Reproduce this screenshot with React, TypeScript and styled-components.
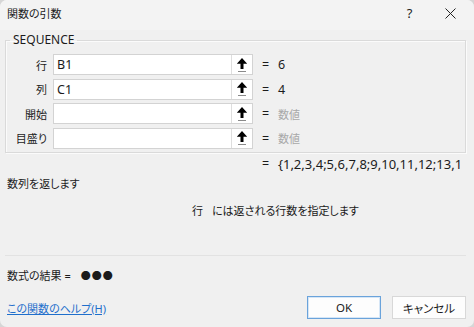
import React from 'react';
import styled, { createGlobalStyle, css } from 'styled-components';

const latin = `"Noto Sans", "Noto Sans CJK JP", sans-serif`;

const GlobalStyle = createGlobalStyle`
  html, body {
    margin: 0;
    padding: 0;
    background: #d6d6d6;
  }
  body {
    font-family: ${latin};
    font-feature-settings: 'palt';
    color: #1b1b1b;
  }
`;

// 行ごとの列幅（グループ内と結果行で共通）
const argColumns = css`
  display: grid;
  grid-template-columns: 41px 200px 1fr;
  column-gap: 6px;
  align-items: center;
`;

const Window = styled.div`
  width: 474px;
  height: 327px;
  box-sizing: border-box;
  background: #f0f0f0;
  border-radius: 7px;
  overflow: hidden;
  display: flex;
  flex-direction: column;
`;

const TitleBar = styled.div`
  height: 30px;
  flex: none;
  display: flex;
  align-items: center;
  padding: 0 3px 4px 7px;
  box-sizing: border-box;
  background: #f3f3f3;
`;

const Title = styled.div`
  flex: 1;
  font-size: 11px;
`;

const TitleButton = styled.div`
  width: 41px;
  height: 26px;
  display: flex;
  align-items: center;
  justify-content: center;
  font-size: 13px;
  color: #222;
`;

const Body = styled.div`
  flex: 1;
  display: flex;
  flex-direction: column;
  padding: 0 8px 0 5px;
`;

const Group = styled.fieldset`
  margin: 2px 0 0 0;
  padding: 6px 0 3px 0;
  border: 1px solid #dadada;
  box-shadow: 1px 1px 0 #fbfbfb, inset 1px 1px 0 #fbfbfb;
  ${argColumns};
  row-gap: 3.5px;
`;

const Legend = styled.legend`
  margin-left: 4px;
  padding: 0 3px;
  font-size: 12px;
  line-height: 16px;
`;

const ArgLabel = styled.div`
  text-align: right;
  font-size: 11px;
`;

const Field = styled.div`
  display: flex;
  height: 21px;
  box-sizing: border-box;
  border: 1px solid #d3d3d3;
  background: #fff;
`;

const TextBox = styled.div`
  flex: 1;
  padding-left: 3px;
  font-size: 12.5px;
  line-height: 19px;
`;

const RefButton = styled.div`
  width: 20px;
  border-left: 1px solid #dedede;
  display: flex;
  align-items: center;
  justify-content: center;
`;

const Value = styled.div<{ $muted?: boolean }>`
  display: flex;
  align-items: center;
  white-space: nowrap;
  overflow: hidden;
  font-size: ${p => (p.$muted ? '11px' : '12.5px')};
  color: ${p => (p.$muted ? '#a8a8a8' : '#1b1b1b')};
`;

const Equal = styled.span`
  width: 16px;
  padding-left: 3px;
  flex: none;
  font-size: 12.5px;
  color: #1b1b1b;
`;

const ResultRow = styled.div`
  ${argColumns};
  margin: 3px 0 0 1px;
  height: 16px;
`;

const ResultValue = styled(Value)`
  grid-column: 3;
  font-size: 13px;
`;

const Description = styled.div`
  margin-top: 4px;
  padding-left: 2px;
  font-size: 11px;
  line-height: 16px;
`;

const ArgHelp = styled.div`
  margin-top: 11px;
  padding-left: 187px;
  display: flex;
  gap: 9px;
  font-size: 11px;
  line-height: 16px;
`;

const Footer = styled.div`
  margin-top: auto;
  border-top: 1px solid #e2e2e2;
  padding: 9px 0 8px 2px;
`;

const FormulaResult = styled.div`
  height: 20px;
  display: flex;
  align-items: center;
  font-size: 11px;
`;

const Dots = styled.span`
  margin-left: 10px;
  font-size: 10px;
  letter-spacing: 1px;
`;

const BottomRow = styled.div`
  margin-top: 11px;
  display: flex;
  align-items: center;
  gap: 11px;
`;

const HelpLink = styled.a`
  flex: 1;
  font-size: 11px;
  color: #1f6fcc;
  text-decoration: underline;
`;

const Button = styled.div<{ $primary?: boolean }>`
  width: 74px;
  height: 23px;
  box-sizing: border-box;
  display: flex;
  align-items: center;
  justify-content: center;
  font-size: 11.5px;
  background: #fdfdfd;
  border: 1px solid ${p => (p.$primary ? '#6aa3db' : '#d8d8d8')};
  box-shadow: ${p => (p.$primary ? 'inset 0 0 0 1px #d6e6f6' : 'none')};
`;

const CollapseIcon = () => (
  <svg width="12" height="16" viewBox="0 0 12 16">
    <polygon points="6,1 0.8,6.8 4.5,6.8 4.5,12 7.5,12 7.5,6.8 11.2,6.8" fill="#000" />
    <line x1="2" y1="14.5" x2="10" y2="14.5" stroke="#8a8a8a" strokeWidth="1" />
  </svg>
);

const CloseIcon = () => (
  <svg width="11" height="11" viewBox="0 0 11 11">
    <path d="M0.5 0.5 L10.5 10.5 M10.5 0.5 L0.5 10.5" stroke="#222" strokeWidth="1" />
  </svg>
);

interface ArgItem {
  label: string;
  input: string;
  value: string;
  muted?: boolean;
}

const args: ArgItem[] = [
  { label: '行', input: 'B1', value: '6' },
  { label: '列', input: 'C1', value: '4' },
  { label: '開始', input: '', value: '数値', muted: true },
  { label: '目盛り', input: '', value: '数値', muted: true },
];

export default function App() {
  return (
    <Window>
      <GlobalStyle />
      <TitleBar>
        <Title>関数の引数</Title>
        <TitleButton>?</TitleButton>
        <TitleButton><CloseIcon /></TitleButton>
      </TitleBar>

      <Body>
        {/* 引数のグループ */}
        <Group>
          <Legend>SEQUENCE</Legend>
          {args.map(a => (
            <React.Fragment key={a.label}>
              <ArgLabel>{a.label}</ArgLabel>
              <Field>
                <TextBox>{a.input}</TextBox>
                <RefButton><CollapseIcon /></RefButton>
              </Field>
              <Value $muted={a.muted}>
                <Equal>=</Equal>
                {a.value}
              </Value>
            </React.Fragment>
          ))}
        </Group>

        <ResultRow>
          <ResultValue>
            <Equal>=</Equal>
            {'{1,2,3,4;5,6,7,8;9,10,11,12;13,1'}
          </ResultValue>
        </ResultRow>

        <Description>数列を返します</Description>
        <ArgHelp>
          <span>行</span>
          <span>には返される行数を指定します</span>
        </ArgHelp>

        <Footer>
          <FormulaResult>
            数式の結果 =<Dots>●●●</Dots>
          </FormulaResult>
          <BottomRow>
            <HelpLink>この関数のヘルプ(H)</HelpLink>
            <Button $primary>OK</Button>
            <Button>キャンセル</Button>
          </BottomRow>
        </Footer>
      </Body>
    </Window>
  );
}
